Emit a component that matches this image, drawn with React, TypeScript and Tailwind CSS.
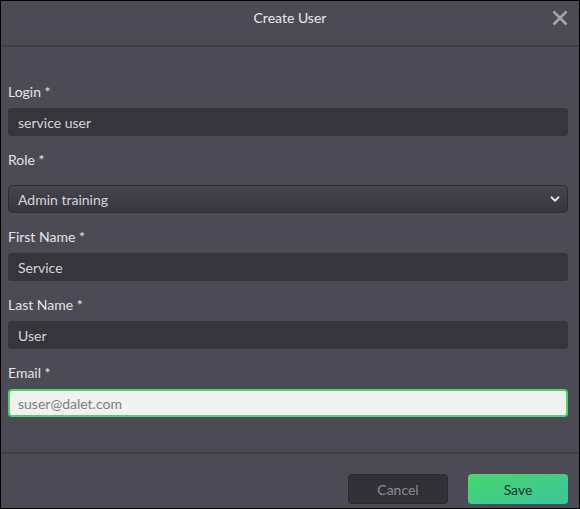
import { ChevronDown } from "lucide-react";

const font = { fontFamily: "Lato, 'Open Sans', sans-serif" };

function Field({
  label,
  value,
  gap = "mb-[6px]",
}: {
  label: string;
  value: string;
  gap?: string;
}) {
  return (
    <div className="flex flex-col">
      <span className={`h-5 text-[14px] leading-5 text-[#e4e4e8] ${gap}`}>{label}</span>
      <div className="flex h-[28px] items-center rounded-[4px] bg-[#36353c] pl-[10px] text-[14px] text-[#d6d6da]">
        {value}
      </div>
    </div>
  );
}

export default function App() {
  return (
    <div
      className="flex h-[509px] w-[580px] flex-col border border-black bg-[#4c4b55]"
      style={font}
    >
      <header className="relative h-[46px] shrink-0 border-b-2 border-[#3e3d45] pt-[7px] text-center">
        <h1 className="text-[14px] leading-5 text-[#e8e8ec]">Create User</h1>
        <button className="absolute right-[11px] top-[9px] text-[#a5a5ac]">
          <svg width="16" height="16" viewBox="0 0 16 16" fill="none">
            <path
              d="M1.5 1.5 L14.5 14.5 M14.5 1.5 L1.5 14.5"
              stroke="currentColor"
              strokeWidth="2.6"
            />
          </svg>
        </button>
      </header>

      <div className="flex flex-col gap-[14px] pl-[7px] pr-[11px] pt-[35px]">
        <Field label="Login *" value="service user" />

        <div className="flex flex-col">
          <span className="mb-[15px] h-5 text-[14px] leading-5 text-[#e4e4e8]">Role *</span>
          <div className="flex h-[28px] items-center justify-between rounded-[5px] border border-[#2c2b31] bg-gradient-to-b from-[#46454d] to-[#37363d] pl-[9px] pr-[5px] text-[14px] text-[#d6d6da]">
            <span>Admin training</span>
            <ChevronDown size={14} strokeWidth={3.2} className="text-[#e0e0e4]" />
          </div>
        </div>

        <Field label="First Name *" value="Service" />
        <Field label="Last Name *" value="User" />

        <div className="flex flex-col">
          <span className="mb-[6px] h-5 text-[14px] leading-5 text-[#e4e4e8]">Email *</span>
          <div className="flex h-[28px] items-center rounded-[4px] border-2 border-[#4cd36c] bg-[#f1f1f1] pl-[8px] text-[14px] text-[#7c7c80]">
            suser@dalet.com
          </div>
        </div>
      </div>

      <div className="mt-[35px] border-t-2 border-[#3e3d45]" />

      <div className="flex justify-end gap-[20px] pr-[11px] pt-[20px]">
        <button className="h-[30px] w-[100px] rounded-[4px] border border-[#2a292e] bg-[#323137] text-[14px] text-[#8c8c92]">
          Cancel
        </button>
        <button className="h-[30px] w-[100px] rounded-[4px] bg-gradient-to-br from-[#48d46c] to-[#3bc69b] text-[14px] text-[#1d3326]">
          Save
        </button>
      </div>
    </div>
  );
}
